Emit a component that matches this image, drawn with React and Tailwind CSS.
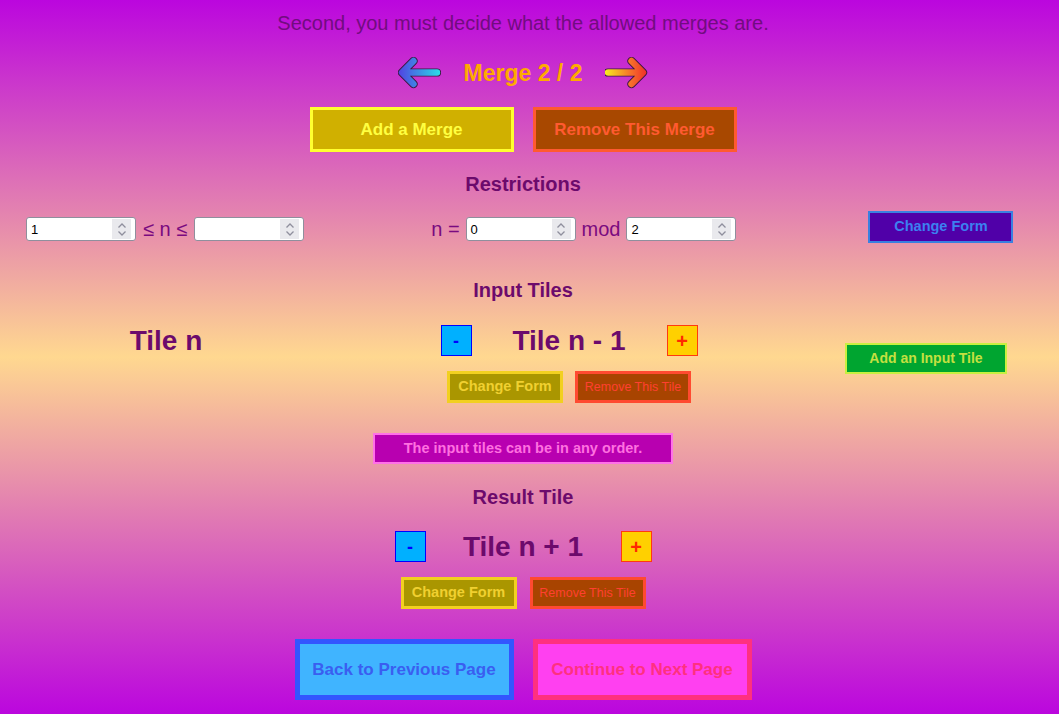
import React from "react";

function Arrow({ dir }) {
  const id = dir === "left" ? "gl" : "gr";
  const d =
    dir === "left"
      ? "M39 15.5 H5 M15.5 4 L4 15.5 L15.5 27"
      : "M3 15.5 H37 M26.5 4 L38 15.5 L26.5 27";
  return (
    <svg width="43" height="32" viewBox="0 0 43 32">
      <defs>
        <linearGradient id={id} x1="0" y1="0" x2="43" y2="0" gradientUnits="userSpaceOnUse">
          {dir === "left" ? (
            <>
              <stop offset="0" stopColor="#5240e2" />
              <stop offset="1" stopColor="#28e0e8" />
            </>
          ) : (
            <>
              <stop offset="0" stopColor="#f8ec20" />
              <stop offset="0.6" stopColor="#f6702a" />
              <stop offset="1" stopColor="#ee2a2a" />
            </>
          )}
        </linearGradient>
      </defs>
      <path d={d} fill="none" stroke="#3a1840" strokeWidth="8.2" strokeLinecap="round" strokeLinejoin="round" />
      <path d={d} fill="none" stroke={`url(#${id})`} strokeWidth="6.4" strokeLinecap="round" strokeLinejoin="round" />
    </svg>
  );
}

function NumInput({ value }) {
  return (
    <div className="flex h-[24px] w-[110px] items-center rounded-[3px] border border-[#8f8f9d] bg-white pl-[4px] pr-[4px]">
      <span className="flex-1 text-[13px] leading-none text-black">{value}</span>
      <div className="flex h-[20px] w-[19px] flex-col items-center justify-center bg-[#e9e9ed]">
        <svg width="10" height="17" viewBox="0 0 10 17">
          <path d="M1.5 6.5 L5 3 L8.5 6.5" fill="none" stroke="#8f8f9d" strokeWidth="1.3" />
          <path d="M1.5 10.5 L5 14 L8.5 10.5" fill="none" stroke="#8f8f9d" strokeWidth="1.3" />
        </svg>
      </div>
    </div>
  );
}

function TileControls({ label, gap }) {
  return (
    <div className="flex flex-col items-center">
      <div className="flex h-[31px] items-center">
        <div className="flex h-[31px] w-[31px] items-center justify-center border border-[#0000ff] bg-[#00b0ff] text-[18px] font-bold leading-none text-[#0000ff]">
          -
        </div>
        <div className="w-[195px] text-center text-[28px] font-bold leading-none text-[#6c0a6c]">{label}</div>
        <div className="flex h-[31px] w-[31px] items-center justify-center border border-[#ff3a10] bg-[#ffd000] text-[20px] font-bold leading-none text-[#ff2a00]">
          +
        </div>
      </div>
      <div className={`mt-[15px] flex ${gap}`}>
        <div className="flex h-[32px] w-[116px] items-center justify-center border-[3px] border-[#f2d020] bg-[#aa9600] text-[14.5px] font-bold text-[#f0d030]">
          Change Form
        </div>
        <div className="flex h-[32px] w-[116px] items-center justify-center border-[3px] border-[#ff4a30] bg-[#a84400] text-[12.5px] text-[#ff4030]">
          Remove This Tile
        </div>
      </div>
    </div>
  );
}

export default function App() {
  return (
    <div
      className="h-[714px] w-full overflow-hidden bg-[linear-gradient(to_bottom,#bb06de_0%,#ffd890_50%,#bb06de_100%)]"
      style={{ fontFamily: '"Liberation Sans", Arial, sans-serif' }}
    >
      <div className="flex w-[1046px] flex-col items-center">
        <div className="flex h-[46px] items-center text-[20px] text-[#720c80]">
          Second, you must decide what the allowed merges are.
        </div>
        <div className="flex h-[54px] items-center">
          <Arrow dir="left" />
          <div className="w-[164px] text-center text-[23px] font-bold leading-none text-[#ffaa00]">Merge 2 / 2</div>
          <Arrow dir="right" />
        </div>
        <div className="mt-[7px] flex gap-[19px]">
          <div className="flex h-[45px] w-[204px] items-center justify-center border-[3px] border-[#ffff30] bg-[#d0b000] text-[17px] font-bold text-[#ffff40]">
            Add a Merge
          </div>
          <div className="flex h-[45px] w-[204px] items-center justify-center border-[3px] border-[#ff5a30] bg-[#a84800] text-[17px] font-bold text-[#ff5a30]">
            Remove This Merge
          </div>
        </div>
        <div className="mt-[17px] flex h-[30px] items-center text-[20px] font-bold text-[#6c0a6c]">Restrictions</div>
        <div className="mt-[10px] flex h-[40px] w-full items-center pl-[26px] text-[20px] text-[#7a0a80]">
          <NumInput value="1" />
          <span className="mx-[7px] leading-none">≤ n ≤</span>
          <NumInput value="" />
          <span className="ml-[127px] mr-[6px] leading-none">n =</span>
          <NumInput value="0" />
          <span className="mx-[6px] leading-none">mod</span>
          <NumInput value="2" />
          <div className="ml-[132px] -mt-[4px] flex h-[32px] w-[145px] items-center justify-center border-[2px] border-[#3a80e0] bg-[#5000a8] text-[14.5px] font-bold text-[#3c80f0]">
            Change Form
          </div>
        </div>
        <div className="mt-[26px] flex h-[30px] items-center text-[20px] font-bold text-[#6c0a6c]">Input Tiles</div>
        <div className="mt-[20px] grid w-full grid-cols-[332px_474px_240px]">
          <div className="flex h-[31px] items-center justify-center text-[28px] font-bold leading-none text-[#6c0a6c]">
            Tile n
          </div>
          <TileControls label="Tile n - 1" gap="gap-[12px]" />
          <div className="flex justify-center pt-[18px]">
            <div className="flex h-[31px] w-[162px] items-center justify-center border-[2px] border-[#c8f040] bg-[#00a530] text-[14px] font-bold text-[#c4e040]">
              Add an Input Tile
            </div>
          </div>
        </div>
        <div className="mt-[30px] flex h-[31px] w-[300px] items-center justify-center border-[2px] border-[#ff70e8] bg-[#b800b0] text-[14.5px] font-bold text-[#ff70e0]">
          The input tiles can be in any order.
        </div>
        <div className="mt-[18px] flex h-[30px] items-center text-[20px] font-bold text-[#6c0a6c]">Result Tile</div>
        <div className="mt-[19px]">
          <TileControls label="Tile n + 1" gap="gap-[13px]" />
        </div>
        <div className="mt-[30px] flex gap-[19px]">
          <div className="flex h-[61px] w-[219px] items-center justify-center border-[5px] border-[#3355ff] bg-[#40b4ff] text-[17px] font-bold text-[#3a5ef0]">
            Back to Previous Page
          </div>
          <div className="flex h-[61px] w-[219px] items-center justify-center border-[5px] border-[#ff3080] bg-[#ff40f0] text-[17px] font-bold text-[#ff3080]">
            Continue to Next Page
          </div>
        </div>
      </div>
    </div>
  );
}
